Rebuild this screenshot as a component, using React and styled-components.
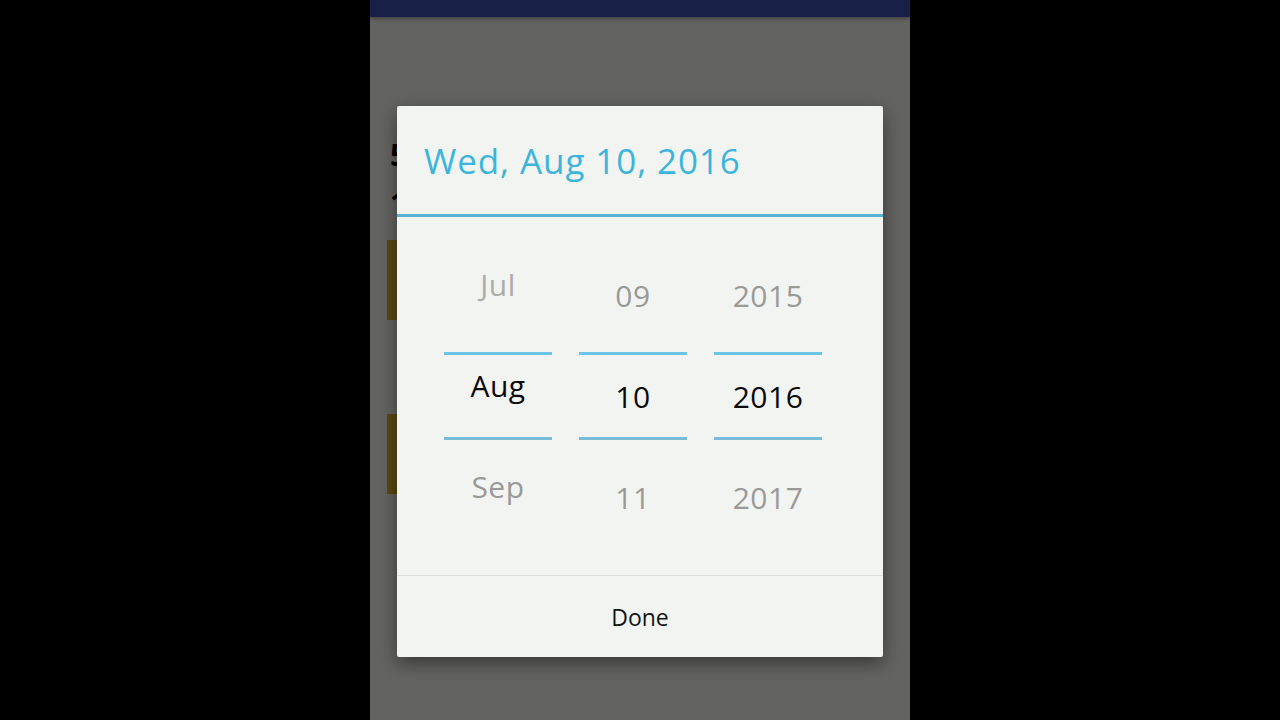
import React from "react";
import styled, { createGlobalStyle } from "styled-components";

const GlobalStyle = createGlobalStyle`
    html, body {
        margin: 0;
        padding: 0;
        background: #000;
        font-family: "Open Sans", "Noto Sans", sans-serif;
    }
`;

const columns = [
    { key: "month", items: ["Jul", "Aug", "Sep"], shift: -11 },
    { key: "day", items: ["09", "10", "11"], shift: 0 },
    { key: "year", items: ["2015", "2016", "2017"], shift: 0 },
];

export default function App() {
    return (
        <Page>
            <GlobalStyle />
            <Phone>
                <AppBar />
                <Content>
                    <BigLine>5</BigLine>
                    <BigLine>1</BigLine>
                    <Card />
                    <Card />
                </Content>
                <Overlay>
                    <Dialog>
                        <Header>
                            <Title>Wed, Aug 10, 2016</Title>
                        </Header>
                        <Picker>
                            {columns.map((col) => (
                                <Column key={col.key}>
                                    {col.items.map((item, i) => (
                                        <Cell key={item} $selected={i === 1}>
                                            <CellText
                                                $selected={i === 1}
                                                $shift={col.shift}
                                                $faint={col.key === "month" && i === 0}
                                            >
                                                {item}
                                            </CellText>
                                        </Cell>
                                    ))}
                                </Column>
                            ))}
                        </Picker>
                        <Footer>
                            <DoneButton>Done</DoneButton>
                        </Footer>
                    </Dialog>
                </Overlay>
            </Phone>
        </Page>
    );
}

const Page = styled.div`
    width: 100vw;
    height: 100vh;
    display: flex;
    justify-content: center;
    background: #000;
    overflow: hidden;
`;

const Phone = styled.div`
    position: relative;
    width: 540px;
    height: 720px;
    background: #f8faf6;
    display: flex;
    flex-direction: column;
    overflow: hidden;
`;

const AppBar = styled.div`
    height: 17px;
    background: #3f51b5;
    box-shadow: 0 2px 4px rgba(0, 0, 0, 0.35);
`;

const Content = styled.div`
    padding: 118px 17px 0 17px;
    display: flex;
    flex-direction: column;
    align-items: flex-start;
`;

const BigLine = styled.div`
    font-size: 30px;
    font-weight: 700;
    line-height: 40px;
    color: #000;
    padding-left: 3px;
    margin-bottom: 8px;
    &:nth-of-type(2) {
        margin-bottom: 17px;
    }
`;

const Card = styled.div`
    width: 420px;
    height: 80px;
    background: #e1b928;
    margin-bottom: 94px;
`;

const Overlay = styled.div`
    position: absolute;
    inset: 0;
    background: rgba(0, 0, 0, 0.6);
    display: flex;
    justify-content: center;
    align-items: flex-start;
    padding-top: 106px;
`;

const Dialog = styled.div`
    width: 486px;
    background: #f2f4f1;
    border-radius: 2px;
    box-shadow: 0 6px 18px rgba(0, 0, 0, 0.45);
    display: flex;
    flex-direction: column;
`;

const Header = styled.div`
    height: 108px;
    display: flex;
    align-items: center;
    padding-left: 27px;
    border-bottom: 3px solid #5ab3d4;
`;

const Title = styled.div`
    font-size: 35px;
    letter-spacing: 0.9px;
    color: #3db4dc;
    margin-top: 0;
`;

const Picker = styled.div`
    display: flex;
    gap: 27px;
    padding: 34px 61px 34px 47px;
`;

const Column = styled.div`
    width: 108px;
    display: flex;
    flex-direction: column;
    gap: 13px;
`;

const Cell = styled.div`
    height: ${(p) => (p.$selected ? "82px" : "88px")};
    display: flex;
    align-items: center;
    justify-content: center;
    border-top: ${(p) => (p.$selected ? "3px solid #6cc5e8" : "none")};
    border-bottom: ${(p) => (p.$selected ? "3px solid #78bcda" : "none")};
`;

const CellText = styled.span`
    font-size: 30px;
    letter-spacing: 0.5px;
    color: ${(p) => (p.$selected ? "#0a0a0a" : p.$faint ? "#acadab" : "#999a98")};
    transform: translateY(${(p) => p.$shift}px);
`;

const Footer = styled.div`
    height: 81px;
    border-top: 1px solid #dcdedb;
    display: flex;
    align-items: center;
    justify-content: center;
`;

const DoneButton = styled.button`
    background: none;
    border: none;
    font-family: "Open Sans", "Noto Sans", sans-serif;
    font-size: 23px;
    color: #141414;
    padding: 0;
    margin-top: 0;
`;
